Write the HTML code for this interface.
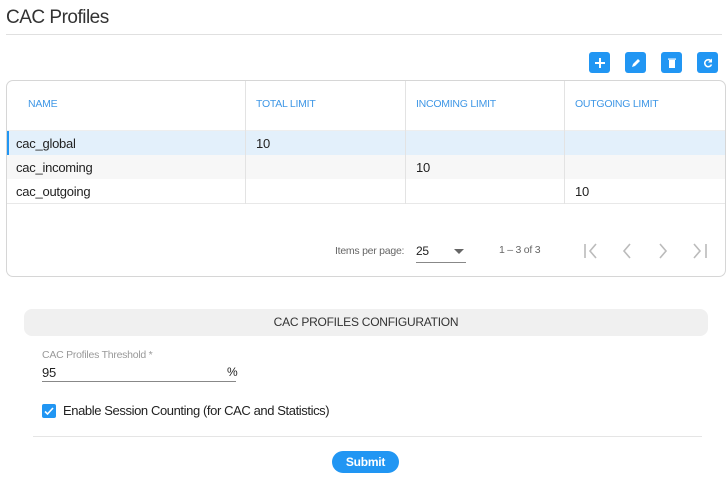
<!DOCTYPE html>
<html><head><meta charset="utf-8"><style>
*{box-sizing:border-box;margin:0;padding:0}
body{width:728px;height:479px;background:#fff;font-family:"Liberation Sans",sans-serif;position:relative;overflow:hidden;color:#222;letter-spacing:-0.25px}
.a{position:absolute}
.btn{position:absolute;top:52px;width:21px;height:21px;background:#2196f3;border-radius:3px;display:flex;align-items:center;justify-content:center}
.th{position:absolute;top:98px;font-size:10.5px;color:#3f97e6}
.td{position:absolute;font-size:13px;color:#222}
.vl{position:absolute;top:81px;height:123px;width:1px;background:#e3e3e3}
</style></head><body>
<div class="a" style="left:6px;top:7px;font-size:19px;color:#333;letter-spacing:-0.5px">CAC Profiles</div>
<div class="a" style="left:6px;top:34px;width:716px;height:1px;background:#e0e0e0"></div>

<div class="btn" style="left:589px"><svg width="12" height="12" viewBox="0 0 12 12"><path d="M6 1v10M1 6h10" stroke="#fff" stroke-width="2"/></svg></div>
<div class="btn" style="left:625px"><svg width="12" height="12" viewBox="0 0 12 12"><path d="M2 10l1-3 5-5 2 2-5 5z" fill="#fff"/></svg></div>
<div class="btn" style="left:661px"><svg width="12" height="12" viewBox="0 0 12 12"><rect x="3" y="3" width="6" height="8" fill="#fff"/><rect x="2" y="1.5" width="8" height="1.2" fill="#fff"/></svg></div>
<div class="btn" style="left:697px"><svg width="12" height="12" viewBox="0 0 12 12"><path d="M9 4A3.5 3.5 0 1 0 9.5 7.5" stroke="#fff" stroke-width="1.6" fill="none"/><path d="M10 1.5v4H6z" fill="#fff"/></svg></div>

<div class="a" style="left:6px;top:80px;width:720px;height:197px;border:1px solid #d6d6d6;border-radius:7px"></div>
<div class="a" style="left:7px;top:131px;width:718px;height:24px;background:#e3f0fb"></div>
<div class="a" style="left:7px;top:131px;width:2px;height:24px;background:#2196f3"></div>
<div class="a" style="left:7px;top:155px;width:718px;height:24px;background:#f7f7f7"></div>
<div class="a" style="left:7px;top:203px;width:718px;height:1px;background:#e8e8e8"></div>
<div class="a" style="left:7px;top:130px;width:718px;height:1px;background:#eee"></div>
<div class="vl" style="left:245px"></div><div class="vl" style="left:405px"></div><div class="vl" style="left:564px"></div>
<div class="th" style="left:28px">NAME</div>
<div class="th" style="left:256px">TOTAL LIMIT</div>
<div class="th" style="left:416px">INCOMING LIMIT</div>
<div class="th" style="left:575px">OUTGOING LIMIT</div>
<div class="td" style="left:16px;top:136px">cac_global</div><div class="td" style="left:256px;top:136px">10</div>
<div class="td" style="left:16px;top:160px">cac_incoming</div><div class="td" style="left:416px;top:160px">10</div>
<div class="td" style="left:16px;top:184px">cac_outgoing</div><div class="td" style="left:575px;top:184px">10</div>

<div class="a" style="left:335px;top:245px;font-size:10.5px;color:#666">Items per page:</div>
<div class="a" style="left:416px;top:244px;font-size:12px;color:#222">25</div>
<div class="a" style="left:454px;top:249px;width:0;height:0;border-left:5px solid transparent;border-right:5px solid transparent;border-top:5px solid #666"></div>
<div class="a" style="left:416px;top:262px;width:50px;height:1px;background:#888"></div>
<div class="a" style="left:499px;top:244px;font-size:10.5px;color:#666">1 – 3 of 3</div>
<svg class="a" style="left:580px;top:241px" width="130" height="20" viewBox="0 0 130 20"><g stroke="#bbb" stroke-width="1.6" fill="none"><path d="M5 3v14M16 3l-6 7 6 7"/><path d="M50 3l-6 7 6 7"/><path d="M80 3l6 7-6 7"/><path d="M114 3l6 7-6 7M126 3v14"/></g></svg>

<div class="a" style="left:24px;top:309px;width:684px;height:27px;background:#f0f0f0;border-radius:8px;font-size:12px;color:#333;text-align:center;line-height:27px">CAC PROFILES CONFIGURATION</div>
<div class="a" style="left:42px;top:349px;font-size:10.5px;color:#999">CAC Profiles Threshold *</div>
<div class="a" style="left:42px;top:365px;font-size:13px">95</div>
<div class="a" style="left:227px;top:365px;font-size:12px">%</div>
<div class="a" style="left:42px;top:381px;width:194px;height:1px;background:#888"></div>
<div class="a" style="left:42px;top:404px;width:14px;height:14px;background:#2196f3;border-radius:2px"><svg width="14" height="14" viewBox="0 0 14 14"><path d="M3 7.5l2.5 2.5 5.5-6" stroke="#fff" stroke-width="1.6" fill="none"/></svg></div>
<div class="a" style="left:63px;top:403px;font-size:13px;color:#222;letter-spacing:-0.4px">Enable Session Counting (for CAC and Statistics)</div>
<div class="a" style="left:33px;top:436px;width:669px;height:1px;background:#e5e5e5"></div>
<div class="a" style="left:332px;top:451px;width:67px;height:22px;background:#2196f3;border-radius:11px;color:#fff;font-weight:bold;font-size:12px;text-align:center;line-height:22px">Submit</div>
</body></html>
